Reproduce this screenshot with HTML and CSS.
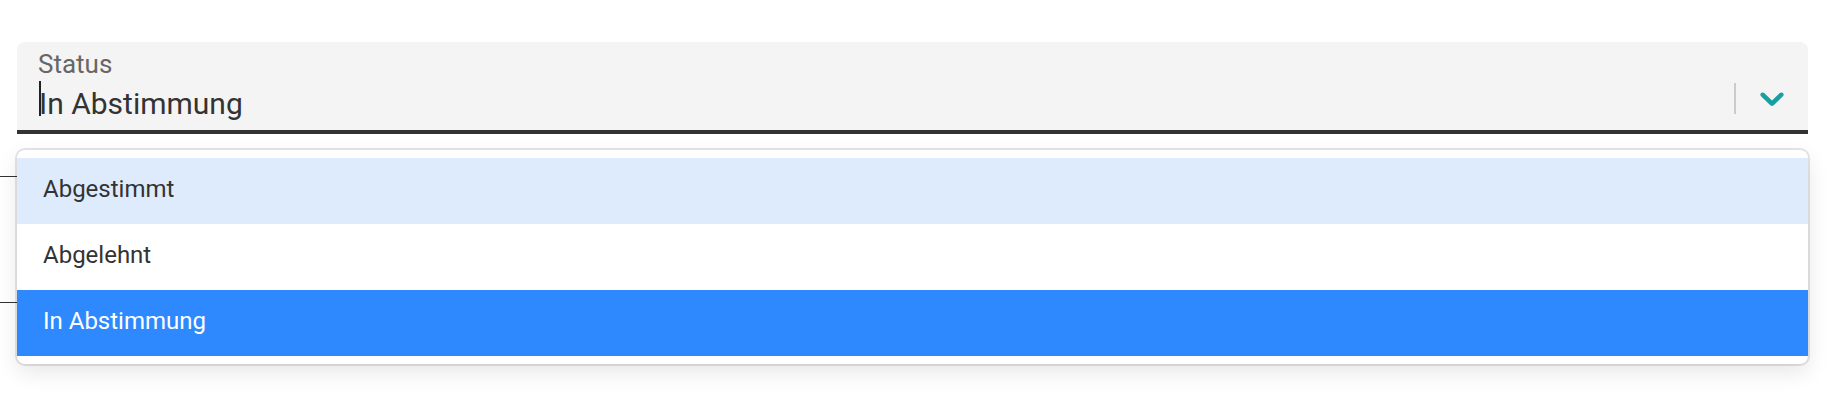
FILE: index.html
```html
<!DOCTYPE HTML>
<html lang="de">
<head>
<meta charset="utf-8"/>
<title>Status</title>
<link rel="stylesheet" href="styles.css">
</head>
<body>
<div class="page">
  <div class="select">
    <div class="field">
      <div class="field-text">
        <div class="field-label">Status</div>
        <div class="field-value">In Abstimmung</div>
      </div>
      <div class="indicators">
        <span class="separator"></span>
        <span class="chevron">
          <svg width="40" height="40" viewBox="0 0 20 20" aria-hidden="true">
            <path d="M4.516 7.548c0.436-0.446 1.043-0.481 1.576 0l3.908 3.747 3.908-3.747c0.533-0.481 1.141-0.446 1.574 0 0.436 0.445 0.408 1.197 0 1.615-0.406 0.418-4.695 4.502-4.695 4.502-0.217 0.223-0.502 0.335-0.787 0.335s-0.57-0.112-0.789-0.335c0 0-4.287-4.084-4.695-4.502s-0.436-1.17 0-1.615z"/>
          </svg>
        </span>
      </div>
    </div>
    <div class="menu">
      <div class="option focused">Abgestimmt</div>
      <div class="option">Abgelehnt</div>
      <div class="option selected">In Abstimmung</div>
    </div>
  </div>
  <div class="rows">
    <div class="row"></div>
    <div class="row"></div>
  </div>
</div>
</body>
</html>
```

FILE: styles.css
```css
body { margin: 0; background: #fff; font-family: Roboto, "Liberation Sans", sans-serif; }

.page { padding: 42px 36px 0 17px; }

.select { position: relative; z-index: 2; }

.field {
  display: flex;
  height: 88px;
  background: #f4f4f4;
  border-radius: 8px 8px 0 0;
  border-bottom: 4px solid #333;
}

.field-text { flex: 1; padding: 7px 0 0 21px; }

.field-label {
  font-size: 26px;
  line-height: 30px;
  color: #666;
  margin-bottom: 7px;
}

.field-value {
  position: relative;
  margin-left: 1px;
  font-size: 30px;
  line-height: 35px;
  color: #333;
}

.field-value::before {
  content: "";
  position: absolute;
  left: 0;
  top: -5px;
  width: 2px;
  height: 35px;
  background: #222;
}

.indicators {
  align-self: flex-end;
  display: flex;
  align-items: center;
  height: 64px;
}

.separator { width: 2px; height: 31px; background: #ccc; }

.chevron { display: flex; padding: 0 16px; }
.chevron svg { fill: #1a9fa1; }

.menu {
  position: absolute;
  top: 100%;
  left: 0;
  right: 0;
  margin-top: 16px;
  padding: 8px 0;
  background: #fff;
  border-radius: 8px;
  box-shadow: 0 0 0 2px rgba(0, 0, 0, 0.1), 0 8px 22px rgba(0, 0, 0, 0.1);
}

.option {
  padding: 14px 26px 18px;
  font-size: 24px;
  line-height: 34px;
  color: #333;
}

.option.focused { background: #deebfd; }
.option.selected { background: #2e88fe; color: #fff; }

.rows { margin: 42px 0 0 -17px; }

.row { height: 125px; border-top: 1px solid #333; }
```
